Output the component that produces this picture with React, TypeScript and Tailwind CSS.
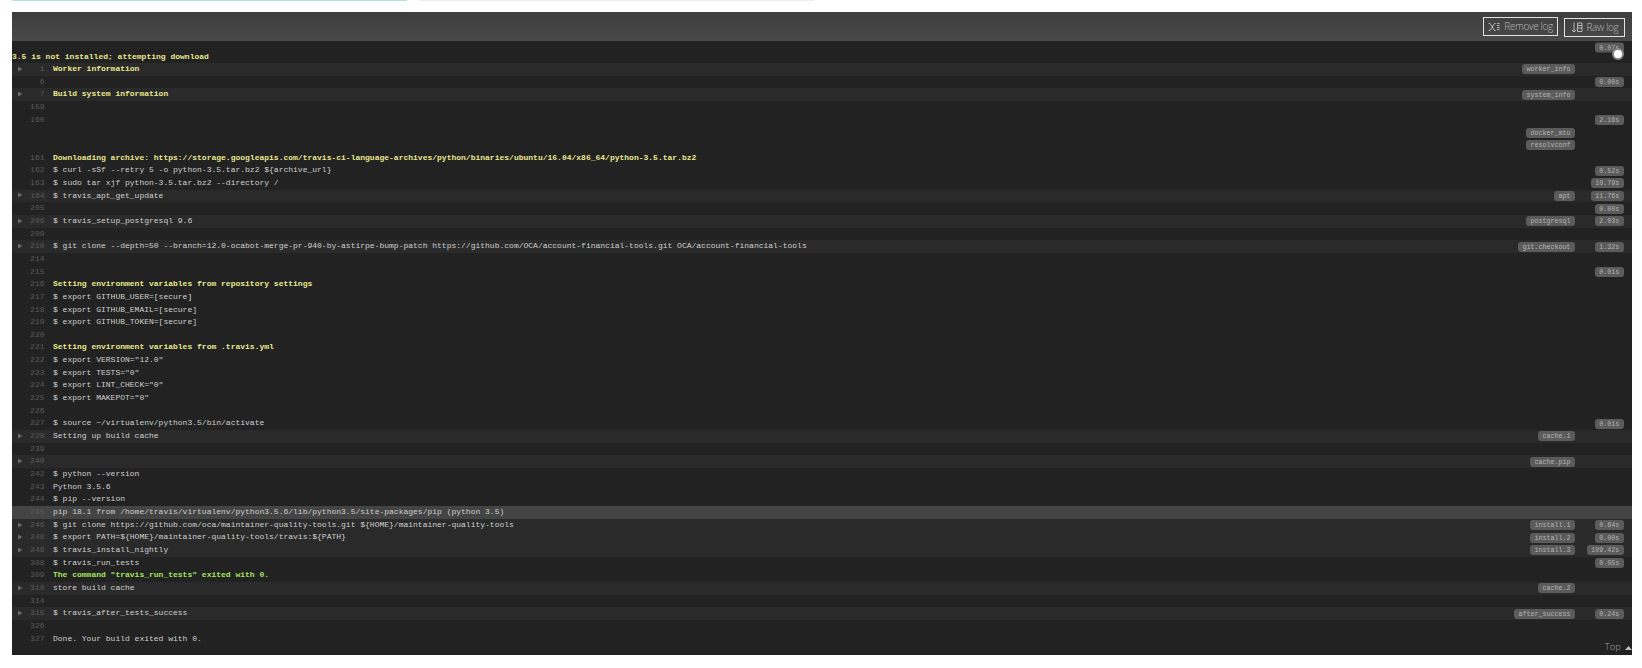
type Tone = 'plain' | 'yellow' | 'green';

interface LogRow {
  num?: string;
  text?: string;
  tone?: Tone;
  fold?: boolean;
  tag?: string;
  time?: string;
  active?: boolean;
  nudge?: boolean;
}

const ROWS: LogRow[] = [
  { text: '3.5 is not installed; attempting download', tone: 'yellow', time: '0.07s', nudge: true },
  { num: '1', text: 'Worker information', tone: 'yellow', fold: true, tag: 'worker_info' },
  { num: '6', time: '0.00s' },
  { num: '7', text: 'Build system information', tone: 'yellow', fold: true, tag: 'system_info' },
  { num: '159' },
  { num: '160', time: '2.16s' },
  { tag: 'docker_mtu' },
  { tag: 'resolvconf' },
  { num: '161', text: 'Downloading archive: https://storage.googleapis.com/travis-ci-language-archives/python/binaries/ubuntu/16.04/x86_64/python-3.5.tar.bz2', tone: 'yellow' },
  { num: '162', text: '$ curl -sSf --retry 5 -o python-3.5.tar.bz2 ${archive_url}', time: '0.52s' },
  { num: '163', text: '$ sudo tar xjf python-3.5.tar.bz2 --directory /', time: '10.79s' },
  { num: '164', text: '$ travis_apt_get_update', fold: true, tag: 'apt', time: '11.76s' },
  { num: '205', time: '0.00s' },
  { num: '206', text: '$ travis_setup_postgresql 9.6', fold: true, tag: 'postgresql', time: '2.03s' },
  { num: '209' },
  { num: '210', text: '$ git clone --depth=50 --branch=12.0-ocabot-merge-pr-940-by-astirpe-bump-patch https://github.com/OCA/account-financial-tools.git OCA/account-financial-tools', fold: true, tag: 'git.checkout', time: '1.32s' },
  { num: '214' },
  { num: '215', time: '0.01s' },
  { num: '216', text: 'Setting environment variables from repository settings', tone: 'yellow' },
  { num: '217', text: '$ export GITHUB_USER=[secure]' },
  { num: '218', text: '$ export GITHUB_EMAIL=[secure]' },
  { num: '219', text: '$ export GITHUB_TOKEN=[secure]' },
  { num: '220' },
  { num: '221', text: 'Setting environment variables from .travis.yml', tone: 'yellow' },
  { num: '222', text: '$ export VERSION="12.0"' },
  { num: '223', text: '$ export TESTS="0"' },
  { num: '224', text: '$ export LINT_CHECK="0"' },
  { num: '225', text: '$ export MAKEPOT="0"' },
  { num: '226' },
  { num: '227', text: '$ source ~/virtualenv/python3.5/bin/activate', time: '0.01s' },
  { num: '228', text: 'Setting up build cache', fold: true, tag: 'cache.1' },
  { num: '239' },
  { num: '240', fold: true, tag: 'cache.pip' },
  { num: '242', text: '$ python --version' },
  { num: '243', text: 'Python 3.5.6' },
  { num: '244', text: '$ pip --version' },
  { num: '245', text: 'pip 18.1 from /home/travis/virtualenv/python3.5.6/lib/python3.5/site-packages/pip (python 3.5)', active: true },
  { num: '246', text: '$ git clone https://github.com/oca/maintainer-quality-tools.git ${HOME}/maintainer-quality-tools', fold: true, tag: 'install.1', time: '0.64s' },
  { num: '248', text: '$ export PATH=${HOME}/maintainer-quality-tools/travis:${PATH}', fold: true, tag: 'install.2', time: '0.00s' },
  { num: '249', text: '$ travis_install_nightly', fold: true, tag: 'install.3', time: '109.42s' },
  { num: '308', text: '$ travis_run_tests', time: '0.05s' },
  { num: '309', text: 'The command "travis_run_tests" exited with 0.', tone: 'green' },
  { num: '310', text: 'store build cache', fold: true, tag: 'cache.2' },
  { num: '314' },
  { num: '315', text: '$ travis_after_tests_success', fold: true, tag: 'after_success', time: '0.24s' },
  { num: '326' },
  { num: '327', text: 'Done. Your build exited with 0.' },
];

function RemoveIcon() {
  return (
    <svg width="12" height="10" viewBox="0 0 12 10" fill="none" stroke="#d0d0d0" strokeWidth="0.8">
      <path d="M0.5 1.5h1.5l4.5 7h1.2M0.5 8.5h1.5l4.5-7h1.2" />
      <path d="M9 1.5h2.5M9 3.5h2.5M9 5.5h2.5M9 7.5h2.5" />
    </svg>
  );
}

function RawIcon() {
  return (
    <svg width="12" height="11" viewBox="0 0 12 11" fill="none" stroke="#d0d0d0" strokeWidth="0.8">
      <path d="M3 0.5v9.5M0.8 7.8L3 10l2.2-2.2" />
      <path d="M6.5 1h4.5v8.5h-4.5zM6.5 3.5h4.5M6.5 6h4.5" />
    </svg>
  );
}

function FoldArrow() {
  return (
    <svg width="5" height="6" viewBox="0 0 5 6" className="mb-[1px]">
      <path d="M0 0.5L4.5 3L0 5.5z" fill="#6a6a6a" />
    </svg>
  );
}

function Badge({ label }: { label: string }) {
  return (
    <span className="block h-[10px] rounded-[3px] bg-[#5b5b5b] px-[4.5px] text-[6.67px] leading-[10px] text-[#b4b4b4]">
      {label}
    </span>
  );
}

function Row({ row }: { row: LogRow }) {
  const band = row.active ? 'bg-[#444444]' : row.fold ? 'bg-[#2a2a2a]' : '';
  const tone =
    row.tone === 'yellow'
      ? 'font-bold text-[#e8e88e]'
      : row.tone === 'green'
        ? 'font-bold text-[#a6e25f]'
        : 'text-[#cfcfcf]';

  return (
    <div className={`flex h-[12.667px] items-center ${band}`}>
      {row.num !== undefined || row.tag ? (
        <div className="flex w-[41px] shrink-0 items-center">
          <span className="flex w-[12.5px] justify-end pr-[1.5px]">{row.fold && <FoldArrow />}</span>
          <span className="w-[20px] text-right text-[#5a5a5a]">{row.num}</span>
        </div>
      ) : null}
      <span className={`flex-1 whitespace-pre ${tone} ${row.nudge ? 'translate-y-[1px]' : ''}`}>{row.text}</span>
      {row.tag && <Badge label={row.tag} />}
      <div className="flex w-[57px] shrink-0 justify-end pr-[8.3px]">
        {row.time && (
          <span className={row.nudge ? '-translate-y-[9.5px]' : ''}>
            <Badge label={row.time} />
          </span>
        )}
      </div>
    </div>
  );
}

export default function App() {
  return (
    <div className="h-[668px] w-[1642px] overflow-hidden bg-white">
      <div className="flex h-px">
        <div className="ml-[12px] w-[395px] bg-[#b4dfe0]" />
        <div className="ml-[12px] w-[395px] bg-[#eeeeee]" />
      </div>

      <div className="relative ml-[12px] mt-[11px] h-[643px] w-[1620px] overflow-hidden bg-[#222222] font-['Liberation_Mono',monospace] text-[8px] leading-[12.65px]">
        <div className="flex h-[29px] items-center justify-end bg-gradient-to-b from-[#3e3e3e] to-[#494949] pr-[7px] font-['Open_Sans',sans-serif] text-[10px] font-light tracking-[-0.35px] text-[#b8b8b8]">
          <button className="mr-[6px] flex h-[19px] w-[75px] items-center justify-center gap-[4px] border border-[#e2e2e2]">
            <RemoveIcon />
            Remove log
          </button>
          <button className="mt-[1px] flex h-[19px] w-[61px] items-center justify-center gap-[4px] border border-[#e2e2e2]">
            <RawIcon />
            Raw log
          </button>
        </div>

        <div className="pt-[9.4px]">
          {ROWS.map((row, i) => (
            <Row key={i} row={row} />
          ))}
        </div>

        <div className="absolute bottom-[1px] right-0 flex items-center gap-[4px] font-['Open_Sans',sans-serif] text-[9.5px] font-light text-[#a0a0a0]">
          Top
          <svg width="7" height="4" viewBox="0 0 7 4">
            <path d="M0 4L3.5 0L7 4z" fill="#bdbdbd" />
          </svg>
        </div>

        {/* scrubber dot left over the log */}
        <div className="absolute left-[1600px] top-[36px] size-[12px] rounded-full border-[2px] border-[#8a8a8a] bg-white" />
      </div>
    </div>
  );
}
